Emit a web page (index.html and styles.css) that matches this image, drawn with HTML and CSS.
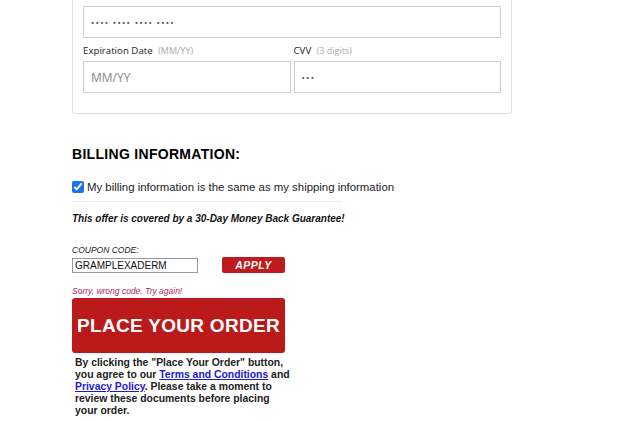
FILE: index.html
```html
<!DOCTYPE html>
<html>
<head>
<meta charset="utf-8">
<link rel="stylesheet" href="styles.css">
</head>
<body>
<div class="page">
  <div class="card">
    <div class="field wide"><span class="dots">•••• •••• •••• ••••</span></div>
    <div class="row">
      <div class="col">
        <div class="label">Expiration Date <span class="hint">(MM/YY)</span></div>
        <div class="field"><span class="ph">MM/YY</span></div>
      </div>
      <div class="col">
        <div class="label">CVV <span class="hint">(3 digits)</span></div>
        <div class="field"><span class="dots">•••</span></div>
      </div>
    </div>
  </div>

  <h2 class="title">BILLING INFORMATION:</h2>
  <label class="same"><input type="checkbox" checked class="chk"><span>My billing information is the same as my shipping information</span></label>
  <div class="rule"></div>
  <p class="offer">This offer is covered by a 30-Day Money Back Guarantee!</p>

  <div class="coupon-label">COUPON CODE:</div>
  <div class="coupon-row">
    <div class="coupon-input">GRAMPLEXADERM</div>
    <button class="apply">APPLY</button>
  </div>
  <div class="error">Sorry, wrong code. Try again!</div>
  <button class="order">PLACE YOUR ORDER</button>
  <p class="terms">By clicking the "Place Your Order" button, you agree to our <a href="#">Terms and Conditions</a> and <a href="#">Privacy Policy</a>. Please take a moment to review these documents before placing your order.</p>
</div>
</body>
</html>
```
FILE: styles.css
```css
html, body { margin: 0; padding: 0; background: #fff; }
body { font-family: "Liberation Sans", Arial, sans-serif; color: #111; }
.page { padding-left: 72px; }

.card {
  width: 418px;
  border: 1px solid #dcdcdc;
  border-top: none;
  border-radius: 0 0 4px 4px;
  padding: 6px 10px 20px 10px;
  font-family: "Open Sans", sans-serif;
}
.field {
  box-sizing: border-box;
  height: 32px;
  border: 1px solid #cfcfcf;
  display: flex;
  align-items: center;
  padding-left: 7px;
}
.dots { font-size: 9px; color: #555; letter-spacing: 1.2px; }
.ph { font-size: 12px; color: #888; }
.row { display: grid; grid-template-columns: 1fr 1fr; gap: 3px; }
.label { font-size: 9.7px; line-height: 14px; margin: 6px 0 3px 0; color: #222; }
.hint { font-size: 9px; color: #aaa; margin-left: 3px; }

.title {
  margin: 32px 0 0 0;
  font-size: 14px;
  line-height: 16px;
  font-weight: 900;
  letter-spacing: 0.3px;
  color: #000;
}
.same { display: flex; align-items: center; margin-top: 19px; font-size: 11.4px; color: #222; }
.chk { width: 12px; height: 12px; margin: 0 3px 0 0; accent-color: #1a73e8; }
.rule { width: 270px; height: 1px; background: #ececec; margin-top: 8px; }
.offer { margin: 10px 0 0 0; font-size: 10px; font-weight: bold; font-style: italic; color: #111; line-height: 13px; }

.coupon-label { margin-top: 20px; font-size: 8.5px; font-style: italic; color: #222; line-height: 11px; }
.coupon-row { display: flex; align-items: center; margin-top: 1px; }
.coupon-input {
  box-sizing: border-box;
  width: 126px; height: 15px;
  border: 1px solid #999;
  font-size: 10px; line-height: 13px;
  padding-left: 2px;
  color: #111;
}
.apply {
  margin-left: 24px;
  width: 63px; height: 16px;
  padding: 0;
  border: none;
  border-radius: 2px;
  background: #bf1b1e;
  color: #fff;
  font-family: "Liberation Sans", sans-serif;
  font-weight: bold; font-style: italic;
  font-size: 10.5px;
  letter-spacing: 0.5px;
}
.error { margin-top: 13px; font-size: 8.5px; font-style: italic; color: #b8235a; line-height: 10px; }
.order {
  display: block;
  margin-top: 2px;
  width: 213px; height: 55px;
  border: none;
  border-radius: 3px;
  background: #bb1a1a;
  color: #fff;
  font-family: "Liberation Sans", sans-serif;
  font-weight: bold;
  font-size: 19px;
  letter-spacing: 0.3px;
  padding: 0;
}
.terms {
  margin: 4px 0 0 3px;
  width: 216px;
  font-size: 10.4px;
  line-height: 12px;
  font-weight: bold;
  color: #222;
}
.terms a { color: #1a1ad6; text-decoration: underline; }
```
